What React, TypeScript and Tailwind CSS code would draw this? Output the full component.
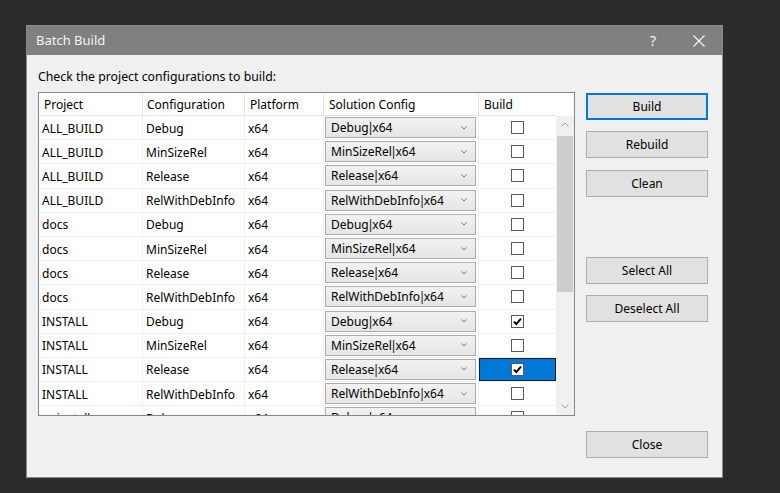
import React from "react";

type Row = { project: string; config: string; checked?: boolean; selected?: boolean };

const configs = ["Debug", "MinSizeRel", "Release", "RelWithDebInfo"];

const rows: Row[] = [
  ...configs.map((c) => ({ project: "ALL_BUILD", config: c })),
  ...configs.map((c) => ({ project: "docs", config: c })),
  ...configs.map((c) => ({
    project: "INSTALL",
    config: c,
    checked: c === "Debug" || c === "Release",
    selected: c === "Release",
  })),
  { project: "uninstall", config: "Debug" },
];

function Chevron({ up = false, color = "#707070", w = 8 }: { up?: boolean; color?: string; w?: number }) {
  const h = w / 2 + 1;
  return (
    <svg width={w} height={h} viewBox={`0 0 ${w} ${h}`} className="shrink-0">
      <polyline
        points={up ? `0.5,${h - 0.5} ${w / 2},1 ${w - 0.5},${h - 0.5}` : `0.5,0.5 ${w / 2},${h - 1} ${w - 0.5},0.5`}
        fill="none"
        stroke={color}
        strokeWidth="1"
      />
    </svg>
  );
}

function CheckBox({ checked }: { checked?: boolean }) {
  return (
    <div className="flex h-[13px] w-[13px] items-center justify-center border border-[#5a5a5a] bg-white">
      {checked && (
        <svg width="11" height="11" viewBox="0 0 11 11">
          <path d="M2 5.6 L4.3 8 L9 2.6" fill="none" stroke="#000" strokeWidth="1.9" />
        </svg>
      )}
    </div>
  );
}

function Button({ label, primary = false, className = "" }: { label: string; primary?: boolean; className?: string }) {
  return (
    <div
      className={`flex h-[27px] w-[122px] items-center justify-center bg-[#e1e1e1] text-[12px] text-black ${
        primary ? "border-2 border-[#0078d7]" : "border border-[#adadad]"
      } ${className}`}
    >
      {label}
    </div>
  );
}

export default function App() {
  return (
    <div className="h-[493px] w-[780px] overflow-hidden bg-[#2b2b2d] pl-[26px] pt-[25px] font-['Noto_Sans',sans-serif]">
      <div className="flex h-[453px] w-[697px] flex-col border border-[#8a8a8a] bg-[#f0f0f0]">
        {/* title bar */}
        <div className="flex h-[29px] shrink-0 items-center bg-[#808080] pl-[9px] text-[13px] text-[#f4f4f4]">
          <span className="flex-1">Batch Build</span>
          <div className="flex h-full w-[46px] items-center justify-center text-[14px]">?</div>
          <div className="flex h-full w-[46px] items-center justify-center">
            <svg width="12" height="12" viewBox="0 0 12 12">
              <path d="M0.5 0.5 L11.5 11.5 M11.5 0.5 L0.5 11.5" stroke="#f4f4f4" strokeWidth="1.2" />
            </svg>
          </div>
        </div>

        {/* body */}
        <div className="flex flex-1 gap-[11px] pl-[11px]">
          <div className="flex w-[537px] flex-col pt-[14px]">
            <div className="h-[16px] text-[12.3px] leading-[16px] text-black">
              Check the project configurations to build:
            </div>
            <div className="mt-[7px] flex h-[324px] border border-[#828790] bg-white">
              <div className="flex w-[517px] flex-col overflow-hidden">
                {/* header */}
                <div className="flex h-[23px] shrink-0 border-b border-[#e5e5e5] bg-white pt-[1px] text-[12px] text-black">
                  <div className="flex w-[104px] items-center border-r border-[#e5e5e5] pl-[5px]">Project</div>
                  <div className="flex w-[102px] items-center border-r border-[#e5e5e5] pl-[4px]">Configuration</div>
                  <div className="flex w-[79px] items-center border-r border-[#e5e5e5] pl-[5px]">Platform</div>
                  <div className="flex w-[155px] items-center border-r border-[#e5e5e5] pl-[5px]">Solution Config</div>
                  <div className="flex w-[77px] items-center pl-[5px]">Build</div>
                </div>
                {rows.map((r, i) => (
                  <div key={i} className="flex h-[24.2px] shrink-0 border-b border-[#f0f0f0] text-[12px] text-black">
                    <div className="flex w-[104px] items-center border-r border-[#f0f0f0] pl-[3px] pt-[2px]">{r.project}</div>
                    <div className="flex w-[102px] items-center border-r border-[#f0f0f0] pl-[3px] pt-[2px]">{r.config}</div>
                    <div className="flex w-[79px] items-center border-r border-[#f0f0f0] pl-[3px] pt-[2px]">x64</div>
                    <div className="flex w-[155px] items-center border-r border-[#f0f0f0] pl-[1px] pr-[2px]">
                      <div className="flex h-[21px] flex-1 items-center border border-[#acacac] bg-gradient-to-b from-[#f2f2f2] to-[#e5e5e5] pl-[5px] pr-[8px]">
                        <span className="flex-1 pt-[1px]">
                          {r.config}
                          <span className="-mx-[1.5px]">|</span>x64
                        </span>
                        <Chevron w={6} />
                      </div>
                    </div>
                    <div
                      className={`flex w-[77px] items-center justify-center ${
                        r.selected ? "border border-[#1a1a1a] bg-[#0078d7]" : ""
                      }`}
                    >
                      <CheckBox checked={r.checked} />
                    </div>
                  </div>
                ))}
              </div>
              {/* scrollbar */}
              <div className="flex w-[18px] flex-col">
                <div className="h-[23px] shrink-0 bg-white" />
                <div className="flex flex-1 flex-col bg-[#f0f0f0]">
                  <div className="flex h-[17px] items-center justify-center">
                    <Chevron up color="#a0a0a0" />
                  </div>
                  <div className="mx-[1px] mt-[3px] h-[156px] bg-[#cdcdcd]" />
                  <div className="flex-1" />
                  <div className="flex h-[17px] items-center justify-center">
                    <Chevron color="#a0a0a0" />
                  </div>
                </div>
              </div>
            </div>
          </div>

          <div className="flex flex-col pt-[38px]">
            <Button label="Build" primary />
            <Button label="Rebuild" className="mt-[11px]" />
            <Button label="Clean" className="mt-[12px]" />
            <Button label="Select All" className="mt-[60px]" />
            <Button label="Deselect All" className="mt-[11px]" />
            <Button label="Close" className="mt-[109px]" />
          </div>
        </div>
      </div>
    </div>
  );
}
